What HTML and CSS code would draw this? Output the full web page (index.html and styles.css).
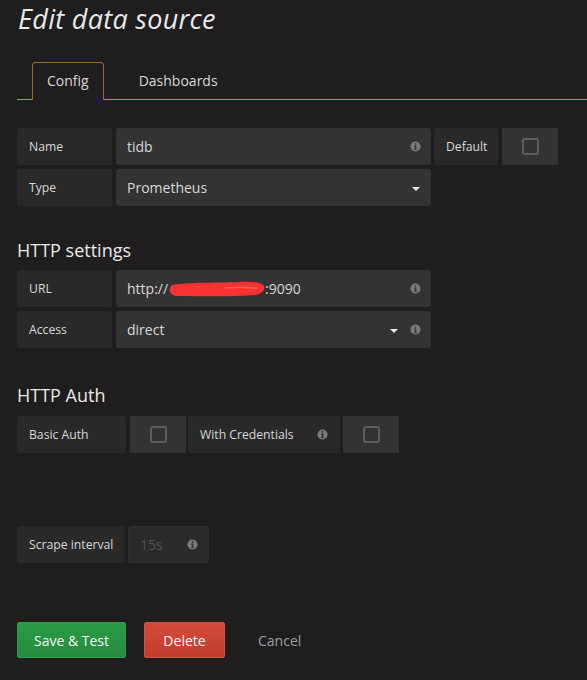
FILE: index.html
```html
<!DOCTYPE html>
<html lang="en">
<head>
  <meta charset="UTF-8">
  <title>Edit data source</title>
  <link rel="stylesheet" href="styles.css">
</head>
<body>
  <div class="page">
    <h1 class="page-title">Edit data source</h1>

    <!-- Tabs -->
    <ul class="tabs">
      <li class="tab active">Config</li>
      <li class="tab">Dashboards</li>
    </ul>

    <!-- Basic -->
    <div class="form-row">
      <span class="form-label w-95">Name</span>
      <div class="form-input w-315">
        <span class="value">tidb</span>
        <svg class="info" viewBox="0 0 12 12"><circle cx="6" cy="6" r="5.5" fill="#7b7b7b"/><rect x="5.2" y="2.3" width="1.7" height="1.7" rx="0.8" fill="#333"/><path d="M4.3 5h2.6v3.6h0.9v1H4.3v-1h0.9V6H4.3z" fill="#333"/></svg>
      </div>
      <span class="form-label w-64">Default</span>
      <span class="check-cell"><span class="checkbox"></span></span>
    </div>
    <div class="form-row">
      <span class="form-label w-95">Type</span>
      <div class="form-input w-315">
        <span class="value">Prometheus</span>
        <span class="caret"></span>
      </div>
    </div>

    <h3 class="section-title">HTTP settings</h3>
    <div class="form-row">
      <span class="form-label w-95">URL</span>
      <div class="form-input w-315">
        <span class="value">http://<svg class="redact" viewBox="0 0 96 16"><path d="M3 4 C20 1 50 2 70 1 C82 0 93 1 95 5 C96 9 93 13 86 14 C60 16 30 15 8 15 C2 14 0 11 1 8 C1 6 2 5 3 4 Z" fill="#fb3232"/><path d="M55 7 C65 6 78 6 88 7" stroke="#ff5a5a" stroke-width="1.5" fill="none"/></svg>:9090</span>
        <svg class="info" viewBox="0 0 12 12"><circle cx="6" cy="6" r="5.5" fill="#7b7b7b"/><rect x="5.2" y="2.3" width="1.7" height="1.7" rx="0.8" fill="#333"/><path d="M4.3 5h2.6v3.6h0.9v1H4.3v-1h0.9V6H4.3z" fill="#333"/></svg>
      </div>
    </div>
    <div class="form-row">
      <span class="form-label w-95">Access</span>
      <div class="form-input w-315">
        <span class="value">direct</span>
        <span class="caret caret-left"></span>
        <svg class="info" viewBox="0 0 12 12"><circle cx="6" cy="6" r="5.5" fill="#7b7b7b"/><rect x="5.2" y="2.3" width="1.7" height="1.7" rx="0.8" fill="#333"/><path d="M4.3 5h2.6v3.6h0.9v1H4.3v-1h0.9V6H4.3z" fill="#333"/></svg>
      </div>
    </div>

    <h3 class="section-title auth-title">HTTP Auth</h3>
    <div class="form-row">
      <span class="form-label w-109">Basic Auth</span>
      <span class="check-cell tight"><span class="checkbox"></span></span>
      <span class="form-label w-152 with-icon">With Credentials
        <svg class="info" viewBox="0 0 12 12"><circle cx="6" cy="6" r="5.5" fill="#7b7b7b"/><rect x="5.2" y="2.3" width="1.7" height="1.7" rx="0.8" fill="#292929"/><path d="M4.3 5h2.6v3.6h0.9v1H4.3v-1h0.9V6H4.3z" fill="#292929"/></svg>
      </span>
      <span class="check-cell"><span class="checkbox"></span></span>
    </div>

    <div class="form-row scrape-row">
      <span class="form-label w-108 narrow">Scrape interval</span>
      <div class="form-input disabled w-81">
        <span class="value">15s</span>
        <svg class="info" viewBox="0 0 12 12"><circle cx="6" cy="6" r="5.5" fill="#7b7b7b"/><rect x="5.2" y="2.3" width="1.7" height="1.7" rx="0.8" fill="#2a2a2a"/><path d="M4.3 5h2.6v3.6h0.9v1H4.3v-1h0.9V6H4.3z" fill="#2a2a2a"/></svg>
      </div>
    </div>

    <!-- Actions -->
    <div class="actions">
      <button class="btn btn-success">Save &amp; Test</button>
      <button class="btn btn-danger">Delete</button>
      <a class="btn-link">Cancel</a>
    </div>
  </div>
</body>
</html>
```

FILE: styles.css
```css
/* General styles */
body {
  margin: 0;
  background-color: #1f1d1e;
  color: #d8d9da;
  font-family: "Open Sans", "Liberation Sans", sans-serif;
  font-size: 14px;
}

.page {
  padding-left: 17px;
}

.page-title {
  margin: 0;
  padding-top: 1px;
  padding-left: 1px;
  font-size: 27px;
  font-style: italic;
  font-weight: 400;
  line-height: 35px;
  letter-spacing: 0.3px;
  color: #e9e9e9;
}

/* Tabs */
.tabs {
  list-style: none;
  margin: 26px 0 0 0;
  padding: 0 0 0 15px;
  display: flex;
  border-bottom: 1px solid #d8901f;
}

.tab {
  height: 36px;
  line-height: 36px;
  padding: 0 14px;
  margin-right: 9px;
  margin-bottom: -1px;
  border: 1px solid transparent;
  border-bottom: none;
  color: #d8d9da;
}

.tab.active {
  border-color: #9c6a27;
  border-radius: 4px 4px 0 0;
  background-color: #1f1d1e;
  height: 37px;
  margin-right: 20px;
}

/* Form rows */
.form-row {
  display: flex;
  height: 37px;
  margin-bottom: 4px;
}

.tabs + .form-row {
  margin-top: 28px;
}

.form-label {
  display: flex;
  align-items: center;
  box-sizing: border-box;
  padding-left: 12px;
  margin-right: 4px;
  background-color: #292929;
  font-size: 12.2px;
  color: #d8d9da;
  border-radius: 2px;
}

.form-label.narrow {
  margin-right: 3px;
}

.form-input {
  display: flex;
  align-items: center;
  box-sizing: border-box;
  padding: 0 10px 0 11px;
  margin-right: 3px;
  background-color: #333333;
  border-radius: 3px;
  font-size: 14px;
}

.form-input .value {
  flex: 1;
  display: flex;
  align-items: center;
}

.form-input.disabled {
  background-color: #2a2a2a;
  border: 1px solid #303030;
  color: #545454;
}

.w-64 { width: 64px; }
.w-81 { width: 81px; }
.w-95 { width: 95px; }
.w-108 { width: 108px; }
.w-109 { width: 109px; }
.w-152 { width: 152px; }
.w-315 { width: 315px; }

.info {
  width: 11px;
  height: 11px;
  flex: none;
}

.with-icon {
  justify-content: space-between;
  padding-right: 12px;
  margin-right: 3px;
}

.caret {
  width: 0;
  height: 0;
  border-left: 4px solid transparent;
  border-right: 4px solid transparent;
  border-top: 4px solid #e9e9e9;
  margin-top: 3px;
  margin-right: 1px;
}

.caret-left {
  margin-right: 12px;
}

.redact {
  width: 96px;
  height: 16px;
  margin-left: 1px;
}

/* Checkbox */
.check-cell {
  width: 56px;
  display: flex;
  align-items: center;
  justify-content: center;
  background-color: #333333;
  margin-right: 3px;
}

.check-cell.tight {
  margin-right: 2px;
}

.checkbox {
  width: 13px;
  height: 13px;
  border: 2px solid #5d5d5d;
  border-radius: 3px;
}

/* Section headings */
.section-title {
  margin: 32px 0 8px 0;
  font-size: 18px;
  font-weight: 400;
  line-height: 24px;
  color: #e9e9e9;
}

.auth-title {
  margin-top: 35px;
  margin-bottom: 9px;
}

.scrape-row {
  margin-top: 73px;
}

/* Buttons */
.actions {
  display: flex;
  align-items: center;
  margin-top: 59px;
}

.btn {
  height: 36px;
  padding: 0;
  border-radius: 2px;
  font-family: inherit;
  font-size: 14px;
  color: #f5f5f5;
  cursor: pointer;
}

.btn-success {
  width: 109px;
  background: linear-gradient(#2a9b45, #278a3f);
  border: 1px solid #2f9e48;
  margin-right: 18px;
}

.btn-danger {
  width: 81px;
  background: linear-gradient(#d44a3a, #c13d2e);
  border: 1px solid #d45141;
  margin-right: 33px;
}

.btn-link {
  color: #9aa0a6;
  font-size: 14px;
}
```
